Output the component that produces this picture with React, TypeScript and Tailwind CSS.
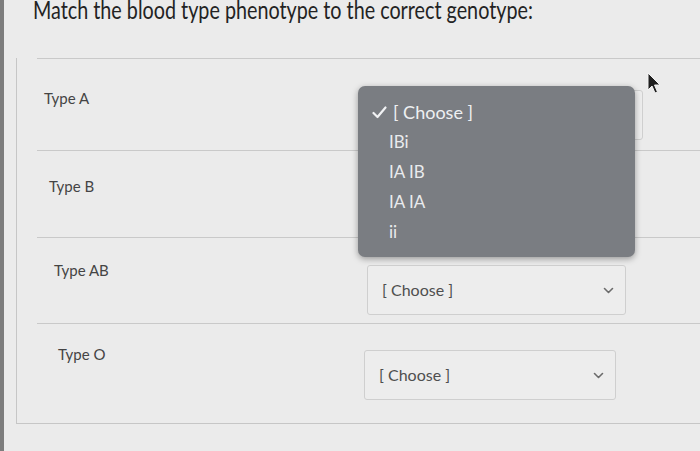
import React from 'react';

interface Row {
  label: string;
  height: string;
  labelClass: string;
  selectClass: string;
}

// the photo is slightly skewed, so each row keeps its own offsets
const rows: Row[] = [
  { label: 'Type A', height: 'h-[92px]', labelClass: 'pt-[29px] ml-[7px]', selectClass: 'ml-[334px] w-[272px] mt-[31px]' },
  { label: 'Type B', height: 'h-[87px]', labelClass: 'pt-[25px] ml-[12px]', selectClass: 'ml-[332px] w-[266px] mt-[33px]' },
  { label: 'Type AB', height: 'h-[86px]', labelClass: 'pt-[22px] ml-[17px]', selectClass: 'ml-[330px] w-[259px] mt-[27px]' },
  { label: 'Type O', height: 'h-[101px]', labelClass: 'pt-[20px] ml-[21px]', selectClass: 'ml-[327px] w-[252px] mt-[26px]' },
];

const options = ['IBi', 'IA IB', 'IA IA', 'ii'];

const Chevron = () => (
  <svg width="11" height="7" viewBox="0 0 11 7" fill="none" stroke="#6b6b6b" strokeWidth="1.6" strokeLinecap="round" strokeLinejoin="round">
    <path d="M1.5 1.5 L5.5 5.5 L9.5 1.5" />
  </svg>
);

const App = () => {
  return (
    <div className="relative w-[700px] h-[451px] overflow-hidden bg-[#ebebeb] font-['Lato','Noto_Sans',sans-serif]">
      {/* dark strip at the very left of the photo */}
      <div className="absolute left-0 top-0 h-full w-[4px] bg-[#7d7d7d]" />

      <div className="pl-[33px] h-[58px]">
        <h1 className="relative top-[-3px] origin-left scale-x-[0.79] whitespace-nowrap text-[25px] leading-[25px] text-[#232323]">
          Match the blood type phenotype to the correct genotype:
        </h1>
      </div>

      <div className="ml-[16px] border-l border-b border-[#c6c6c6] h-[366px] pl-[20px]">
        <div className="border-t border-[#c9c9c9]">
          {rows.map((row, i) => (
            <div
              key={row.label}
              className={`${row.height} flex items-start ${i < rows.length - 1 ? 'border-b border-[#c9c9c9]' : ''}`}
            >
              <div className="w-0 shrink-0 overflow-visible">
                <div className={`${row.labelClass} text-[15px] leading-[20px] text-[#444] whitespace-nowrap`}>
                  {row.label}
                </div>
              </div>
              <div
                className={`${row.selectClass} shrink-0 h-[50px] flex items-center justify-between rounded-[3px] border border-[#cfcfcf] bg-[#ededed] pl-[14px] pr-[11px]`}
              >
                <span className="text-[16px] text-[#4f4f4f]">[ Choose ]</span>
                <Chevron />
              </div>
            </div>
          ))}
        </div>
      </div>

      {/* open dropdown menu */}
      <div className="absolute left-[358px] top-[86px] w-[277px] h-[171px] rounded-[7px] bg-[#7a7d82] shadow-[0_2px_6px_rgba(0,0,0,0.35)] pt-[11px]">
        <div className="h-[30px] flex items-center pl-[14px] text-[18px] text-[#eef0f2]">
          <svg className="mr-[6px]" width="15" height="13" viewBox="0 0 15 13" fill="none" stroke="#f1f2f4" strokeWidth="2.2" strokeLinecap="round" strokeLinejoin="round">
            <path d="M1.5 7 L5.5 11 L13.5 1.5" />
          </svg>
          <span>[ Choose ]</span>
        </div>
        {options.map((opt) => (
          <div key={opt} className="h-[30px] flex items-center pl-[31px] text-[17px] text-[#e9ebed]">
            {opt}
          </div>
        ))}
      </div>

      {/* mouse pointer */}
      <svg className="absolute left-[646px] top-[71px]" width="16" height="24" viewBox="0 0 16 24">
        <path d="M2 2 L2 19 L6 15 L9 22 L11.5 21 L8.5 14 L14 14 Z" fill="#1f1f1f" stroke="#f2f2f2" strokeWidth="1" />
      </svg>
    </div>
  );
};

export default App;
